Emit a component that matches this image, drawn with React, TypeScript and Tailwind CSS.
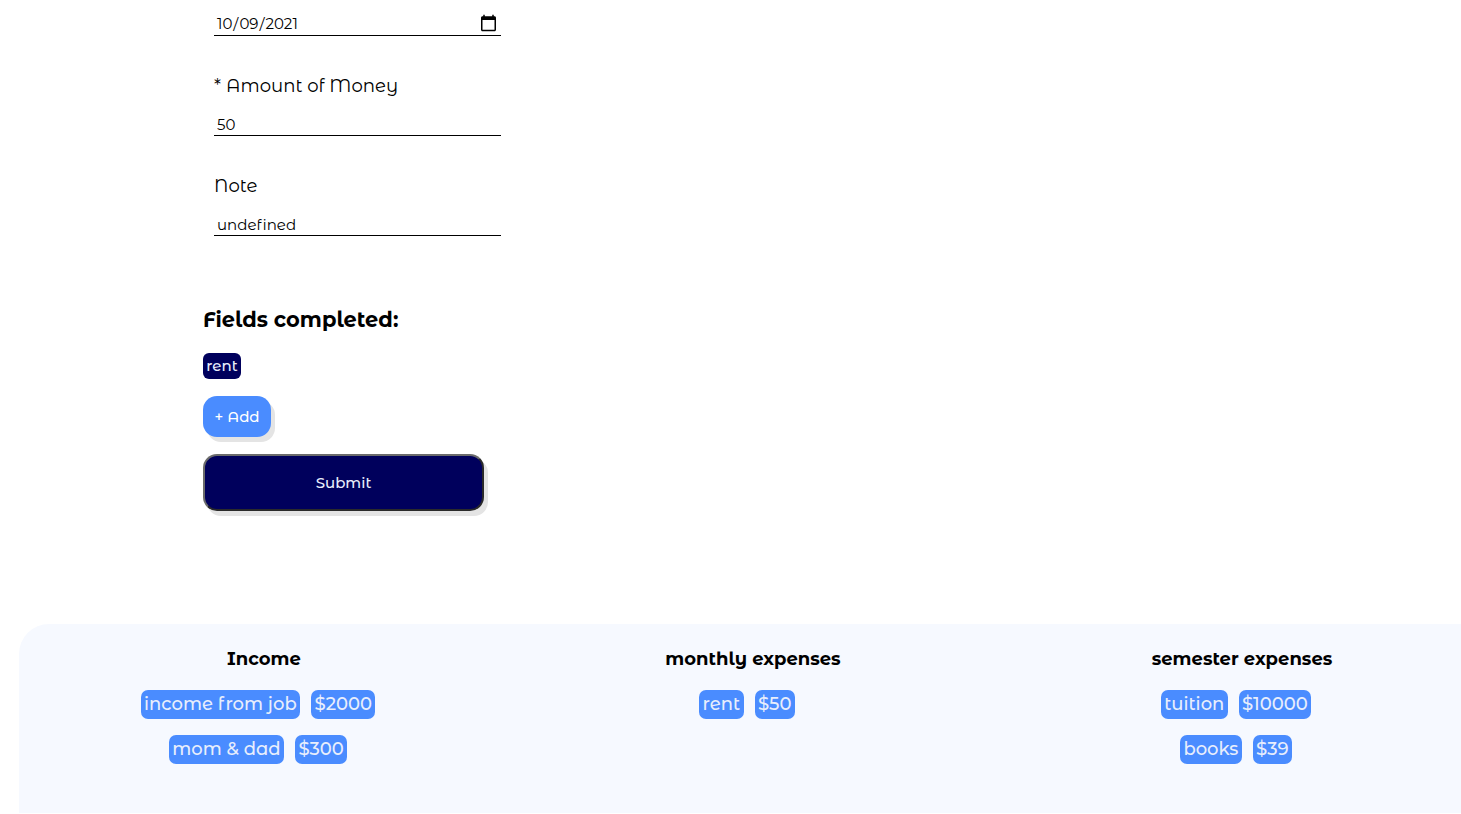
const font = { fontFamily: '"Montserrat Alternates", Inter, "Liberation Sans", sans-serif' };

const sections = [
  {
    title: 'Income',
    rows: [
      ['income from job', '$2000'],
      ['mom & dad', '$300'],
    ],
  },
  {
    title: 'monthly expenses',
    rows: [['rent', '$50']],
  },
  {
    title: 'semester expenses',
    rows: [
      ['tuition', '$10000'],
      ['books', '$39'],
    ],
  },
];

function Chip({ children }: { children: string }) {
  return (
    <span className="mr-[11px] flex h-[29px] items-center whitespace-nowrap rounded-[7px] bg-[#4a8cff] px-[3.4px] text-[18px] font-medium text-[#e8eefc]">
      {children}
    </span>
  );
}

function Field({ label, required, value }: { label: string; required?: boolean; value: string }) {
  return (
    <div className="flex flex-col w-[287px]">
      <label className="h-[26px] flex items-center text-[18.1px] text-black mt-[37px]">
        {required && <span className="mr-[5px] text-[18px]">*</span>}
        {label}
      </label>
      <input
        defaultValue={value}
        className="mt-[13px] h-[24px] border-b border-black pl-[3px] pr-[2px] pt-[2px] text-[15px] text-black outline-none"
      />
    </div>
  );
}

export default function App() {
  return (
    <div className="h-[814px] w-[1461px] overflow-hidden bg-white flex flex-col" style={font}>
      <div className="pl-[203px] flex-1">
        <div className="pl-[11px]">
          <input
            type="date"
            defaultValue="2021-10-09"
            className="h-[36px] w-[287px] border-b border-black pl-[2px] pr-[3px] pt-[13px] pb-0 text-[15px] text-black outline-none [&::-webkit-calendar-picker-indicator]:-mt-[2px] [&::-webkit-calendar-picker-indicator]:h-[19px] [&::-webkit-calendar-picker-indicator]:w-[19px] [&::-webkit-calendar-picker-indicator]:p-0"
          />
          <Field label="Amount of Money" required value="50" />
          <Field label="Note" value="undefined" />
        </div>

        <h2 className="mt-[70px] h-[28px] flex items-center text-[21px] font-bold text-black">Fields completed:</h2>
        <span className="mt-[19px] flex h-[26px] w-[38px] items-center justify-center rounded-[6px] bg-[#00005c] text-[15px] font-medium text-[#e8eefc]">
          rent
        </span>
        <button className="mt-[17px] block h-[41px] w-[68px] rounded-[14px] bg-[#4a8cff] pt-[1px] text-[15px] font-medium text-white shadow-[4px_5px_0_#e4e4e4]">
          + Add
        </button>
        <button className="mt-[17px] block h-[57px] w-[281px] rounded-[14px] border-2 border-t-[#6b6b6b] border-l-[#6b6b6b] border-r-[#2a2a2a] border-b-[#2a2a2a] bg-[#00005c] pt-[1px] text-[15px] font-medium text-[#e8eefc] shadow-[4px_5px_0_#e4e4e4]">
          Submit
        </button>
      </div>

      <div className="ml-[19px] mb-px grid h-[189px] grid-cols-[repeat(3,489px)] rounded-tl-[30px] bg-[#f6f9ff]">
        {sections.map((section) => (
          <div key={section.title} className="flex flex-col items-center pt-[23px]">
            <h3 className="h-[24px] flex items-center pl-[1px] text-[18px] font-bold text-black">{section.title}</h3>
            <div className="mt-[19px] flex flex-col items-center gap-[16px]">
              {section.rows.map((row) => (
                <div key={row[0]} className="flex">
                  <Chip>{row[0]}</Chip>
                  <Chip>{row[1]}</Chip>
                </div>
              ))}
            </div>
          </div>
        ))}
      </div>
    </div>
  );
}
